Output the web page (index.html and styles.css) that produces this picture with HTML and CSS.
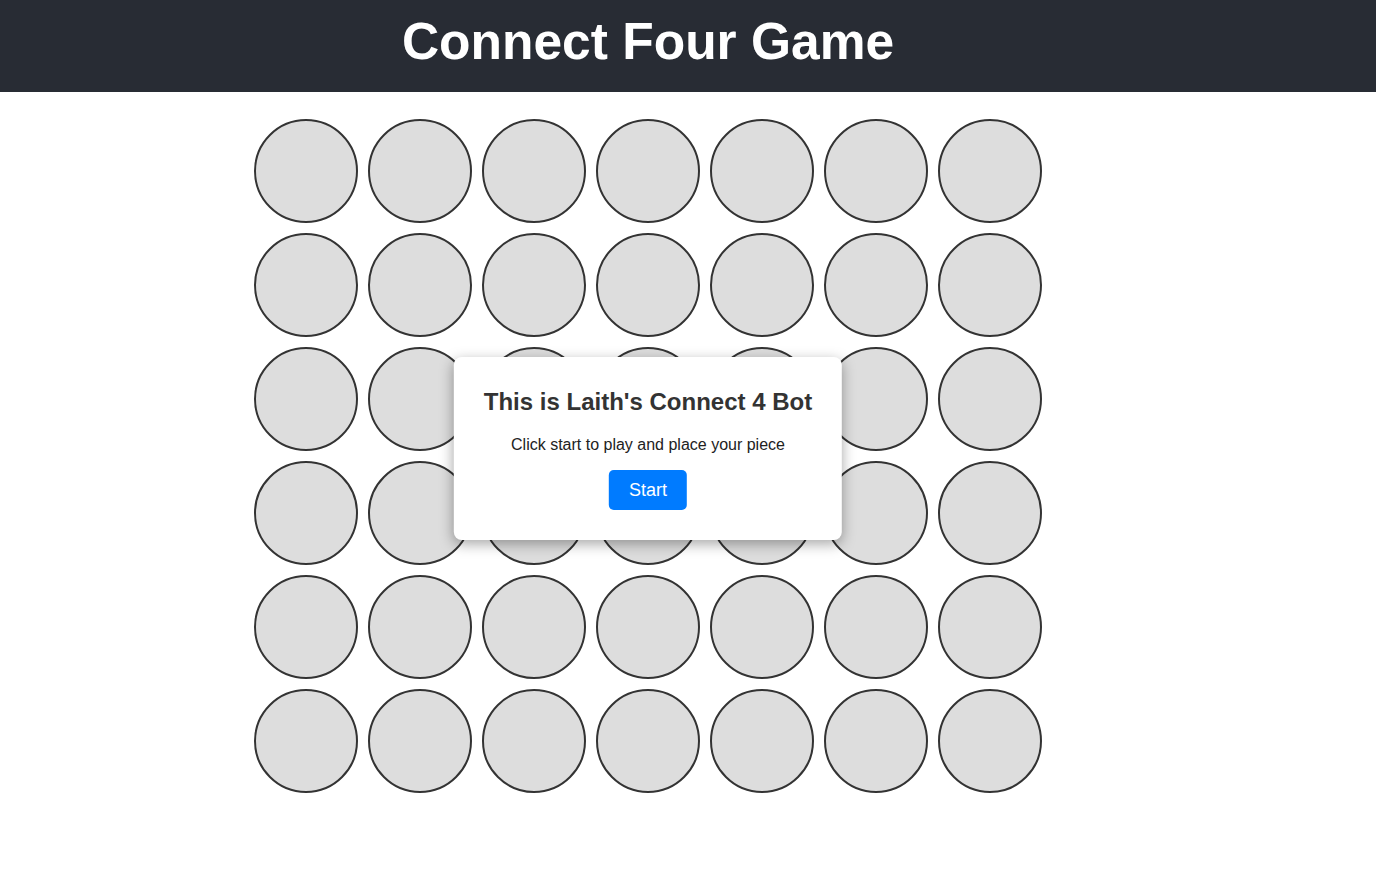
FILE: index.html
```html
<!DOCTYPE html>
<html lang="en">
<head>
<meta charset="utf-8">
<title>Connect Four Game</title>
<link rel="stylesheet" href="styles.css">
</head>
<body>
  <header class="app-header">
    <h1 class="app-title">Connect Four Game</h1>
  </header>
  <main class="game">
    <div class="board-wrap">
      <div class="board">
        <div class="cell"></div><div class="cell"></div><div class="cell"></div><div class="cell"></div><div class="cell"></div><div class="cell"></div><div class="cell"></div>
        <div class="cell"></div><div class="cell"></div><div class="cell"></div><div class="cell"></div><div class="cell"></div><div class="cell"></div><div class="cell"></div>
        <div class="cell"></div><div class="cell"></div><div class="cell"></div><div class="cell"></div><div class="cell"></div><div class="cell"></div><div class="cell"></div>
        <div class="cell"></div><div class="cell"></div><div class="cell"></div><div class="cell"></div><div class="cell"></div><div class="cell"></div><div class="cell"></div>
        <div class="cell"></div><div class="cell"></div><div class="cell"></div><div class="cell"></div><div class="cell"></div><div class="cell"></div><div class="cell"></div>
        <div class="cell"></div><div class="cell"></div><div class="cell"></div><div class="cell"></div><div class="cell"></div><div class="cell"></div><div class="cell"></div>
      </div>
      <div class="modal">
        <h2 class="modal-title">This is Laith's Connect 4 Bot</h2>
        <p class="modal-text">Click start to play and place your piece</p>
        <button class="start-btn" type="button">Start</button>
      </div>
    </div>
  </main>
</body>
</html>
```
FILE: styles.css
```css
html, body {
  margin: 0;
  padding: 0;
  background: #ffffff;
  font-family: "Liberation Sans", Arial, sans-serif;
}

.app-header {
  background: #282c34;
  height: 92px;
  box-sizing: border-box;
  padding: 11px 80px 0 0;
  text-align: center;
}

.app-title {
  margin: 0;
  color: #ffffff;
  font-size: 51.5px;
  font-weight: bold;
  line-height: 60px;
}

.game {
  padding-right: 80px;
  display: flex;
  justify-content: center;
}

.board-wrap {
  position: relative;
  margin-top: 22px;
}

.board {
  display: grid;
  grid-template-columns: repeat(7, 104px);
  grid-auto-rows: 104px;
  gap: 10px;
  padding: 5px;
}

.cell {
  width: 100px;
  height: 100px;
  border: 2px solid #333333;
  border-radius: 50%;
  background: #dddddd;
}

.modal {
  position: absolute;
  left: 50%;
  top: 243px;
  transform: translateX(-50%);
  background: #ffffff;
  border-radius: 8px;
  padding: 31px 30px 30px;
  box-shadow: 0 4px 14px rgba(0, 0, 0, 0.35);
  text-align: center;
  white-space: nowrap;
}

.modal-title {
  margin: 0 0 20px;
  font-size: 24px;
  font-weight: bold;
  color: #333333;
}

.modal-text {
  margin: 0 0 16px;
  font-size: 16px;
  color: #222222;
}

.start-btn {
  font-family: "Liberation Sans", Arial, sans-serif;
  font-size: 18px;
  color: #ffffff;
  background: #007bff;
  border: none;
  border-radius: 5px;
  padding: 10px 20px;
  line-height: 20px;
  cursor: pointer;
}
```
